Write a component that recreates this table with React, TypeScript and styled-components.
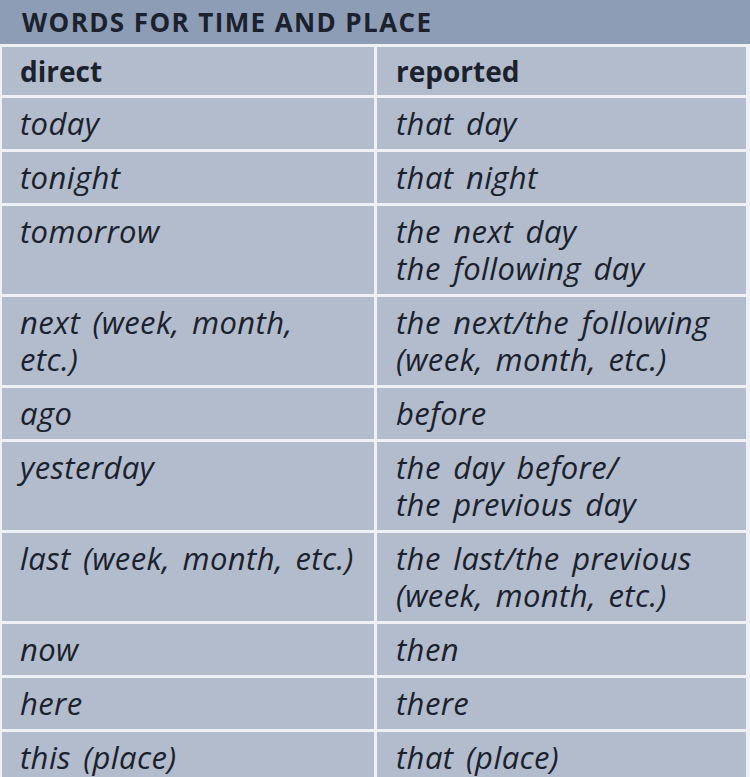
import styled, { createGlobalStyle } from 'styled-components';

const GlobalStyle = createGlobalStyle`
	html, body {
		margin: 0;
		padding: 0;
		background: #eef0f4;
	}
	body {
		width: 750px;
		height: 777px;
		overflow: hidden;
	}
`;

const Table = styled.div`
	width: 750px;
	box-sizing: border-box;
	padding: 0 4px 0 2px;
	display: grid;
	grid-template-columns: 372px 1fr;
	column-gap: 3px;
	row-gap: 3px;
	background: #eef0f4;
	font-family: 'Open Sans', 'DejaVu Sans', sans-serif;
	color: #1b212d;
`;

const Title = styled.div`
	grid-column: 1 / span 2;
	height: 44px;
	box-sizing: border-box;
	margin: 0 -4px 0 -2px;
	padding: 5px 0 0 22px;
	background: #8d9db6;
	font-weight: 700;
	font-size: 26px;
	line-height: 34px;
	letter-spacing: 1.4px;
	text-transform: uppercase;
`;

const Cell = styled.div<{ $head?: boolean; $first?: boolean }>`
	background: #b2bccc;
	box-sizing: border-box;
	padding: ${p => (p.$head ? '6px 0 6px' : '7px 0 7px')};
	padding-left: ${p => (p.$first ? '18px' : '19px')};
	font-size: ${p => (p.$head ? '28px' : '31px')};
	font-weight: ${p => (p.$head ? 700 : 400)};
	font-style: ${p => (p.$head ? 'normal' : 'italic')};
	line-height: ${p => (p.$head ? '36px' : '37px')};
	letter-spacing: ${p => (p.$head ? '0' : '0.4px')};
	word-spacing: ${p => (p.$head ? '0' : '4px')};
`;

const rows: [string[], string[]][] = [
	[['today'], ['that day']],
	[['tonight'], ['that night']],
	[['tomorrow'], ['the next day', 'the following day']],
	[['next (week, month,', 'etc.)'], ['the next/the following', '(week, month, etc.)']],
	[['ago'], ['before']],
	[['yesterday'], ['the day before/', 'the previous day']],
	[['last (week, month, etc.)'], ['the last/the previous', '(week, month, etc.)']],
	[['now'], ['then']],
	[['here'], ['there']],
	[['this (place)'], ['that (place)']],
];

function Lines({ lines }: { lines: string[] }) {
	return (
		<>
			{lines.map((line, i) => (
				<div key={i}>{line}</div>
			))}
		</>
	);
}

export default function App() {
	return (
		<>
			<GlobalStyle />
			<Table>
				<Title>Words for time and place</Title>
				<Cell $head $first>direct</Cell>
				<Cell $head>reported</Cell>
				{rows.map(([direct, reported], index) => (
					<>
						<Cell key={'d' + index} $first>
							<Lines lines={direct} />
						</Cell>
						<Cell key={'r' + index}>
							<Lines lines={reported} />
						</Cell>
					</>
				))}
			</Table>
		</>
	);
}
